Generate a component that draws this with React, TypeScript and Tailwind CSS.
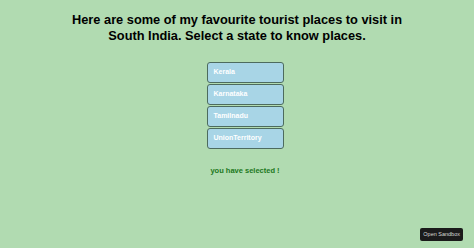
const states = ['Kerala', 'Karnataka', 'Tamilnadu', 'UnionTerritory'];

export default function App() {
  return (
    <div className="relative w-full h-[248px] bg-[#b1dbb1] font-['Liberation_Sans',Arial,sans-serif] flex flex-col items-center overflow-hidden">
      <h1 className="mt-[12px] text-[12.8px] leading-[16px] font-bold text-black text-center w-[360px]">
        Here are some of my favourite tourist places to visit in South India. Select a state to know places.
      </h1>

      <div className="pl-[16px] flex flex-col items-center">
        <div className="mt-[18px] flex flex-col gap-[1px]">
          {states.map((s) => (
            <button
              key={s}
              className="w-[77px] h-[21px] bg-[#a8d5e6] border border-[#4d6b5e] rounded-[3px] text-left pl-[6px] text-[7px] font-bold text-white"
            >
              {s}
            </button>
          ))}
        </div>

        <p className="mt-[16px] text-[7.5px] font-bold text-[#1c781c]">you have selected !</p>
      </div>

      <div className="absolute right-[11px] bottom-[7px] bg-[#1b1b1b] text-[#d9d9d9] text-[5.5px] px-[3px] h-[13px] flex items-center rounded-[2px]">
        Open Sandbox
      </div>
    </div>
  );
}
